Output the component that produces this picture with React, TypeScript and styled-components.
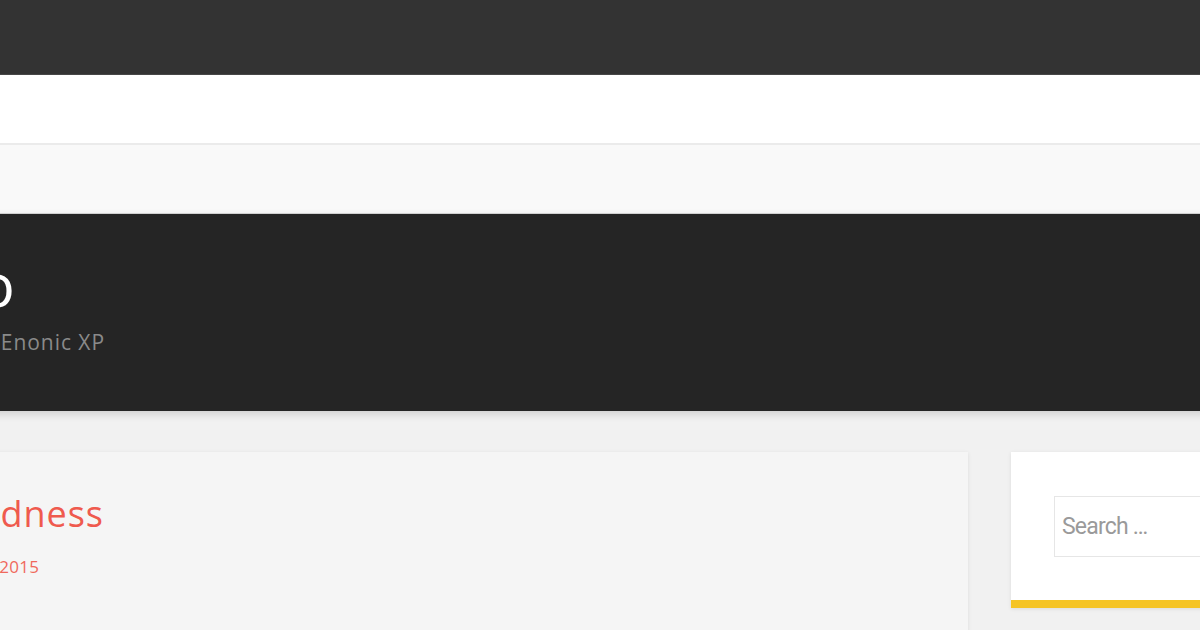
import styled, { createGlobalStyle } from 'styled-components'

const GlobalStyle = createGlobalStyle`
  html,
  body {
    margin: 0;
    padding: 0;
    background: #f1f1f1;
    overflow: hidden;
  }
  * {
    box-sizing: border-box;
  }
`

function App() {
  return (
    <>
      <GlobalStyle />
      <Page>
        <TopBar />
        <NavBar />
        <SubBar />
        <Hero>
          <SiteTitle>Superhero</SiteTitle>
          <Tagline>Superhero theme built on Enonic XP</Tagline>
        </Hero>
        <Content>
          <PostCard>
            <PostTitle>Madness</PostTitle>
            <PostDate>July 5, 2015</PostDate>
          </PostCard>
          <Sidebar>
            <SearchInput type="search" placeholder="Search …" />
          </Sidebar>
        </Content>
      </Page>
    </>
  )
}

const Page = styled.div`
  width: 1800px;
  margin-left: -400px;
  min-height: 630px;
  font-family: 'Open Sans', 'Noto Sans', sans-serif;
`

const TopBar = styled.div`
  height: 75px;
  background: #333333;
  border-bottom: 1px solid #474747;
`

const NavBar = styled.div`
  height: 70px;
  background: #ffffff;
  border-bottom: 2px solid #ebebeb;
`

const SubBar = styled.div`
  height: 69px;
  background: #f9f9f9;
  border-bottom: 1px solid #d6d6d6;
`

const Hero = styled.header`
  position: relative;
  height: 197px;
  padding: 34px 0 0 119px;
  background: #252525;
  box-shadow: 0 3px 8px rgba(0, 0, 0, 0.14);
`

const SiteTitle = styled.h1`
  margin: 0;
  font-size: 60px;
  line-height: 72px;
  font-weight: 400;
  color: #ffffff;
`

const Tagline = styled.p`
  margin: 7px 0 0;
  font-size: 21px;
  line-height: 30px;
  letter-spacing: 0.95px;
  color: #8a8a8a;
`

const Content = styled.main`
  display: flex;
  align-items: flex-start;
  gap: 43px;
  padding: 41px 0 0 300px;
`

const PostCard = styled.article`
  flex: none;
  width: 1068px;
  min-height: 400px;
  padding: 40px 46px;
  background: #f5f5f5;
  box-shadow: 0 1px 4px rgba(0, 0, 0, 0.09);
`

const PostTitle = styled.h2`
  margin: 0;
  font-size: 36px;
  line-height: 44px;
  font-weight: 400;
  letter-spacing: 1px;
  color: #ef5a4e;
`

const PostDate = styled.div`
  margin-top: 19px;
  font-size: 17px;
  line-height: 24px;
  letter-spacing: 0.3px;
  color: #f0695c;
`

const Sidebar = styled.aside`
  flex: none;
  width: 300px;
  padding: 44px 43px 43px;
  background: #ffffff;
  border-bottom: 8px solid #f5c425;
  box-shadow: 0 1px 4px rgba(0, 0, 0, 0.09);
`

const SearchInput = styled.input`
  display: block;
  width: 100%;
  height: 61px;
  padding: 0 7px;
  border: 1px solid #e6e6e6;
  background: #ffffff;
  outline: none;
  font-family: Roboto, 'Open Sans', sans-serif;
  font-size: 23px;
  letter-spacing: -0.8px;
  color: #555;
  &::placeholder {
    color: #9a9a9a;
  }
`

export default App
